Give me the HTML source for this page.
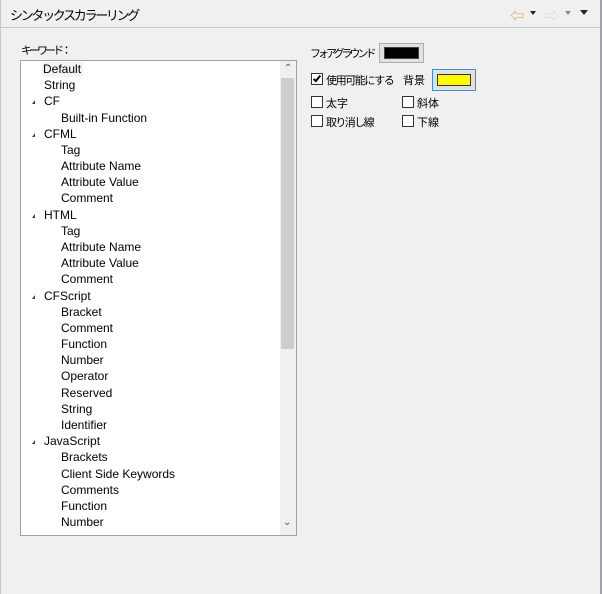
<!DOCTYPE html>
<html><head><meta charset="utf-8"><style>
*{margin:0;padding:0;box-sizing:border-box}
body{width:602px;height:594px;background:#f0f0f0;font-family:"Liberation Sans","Noto Sans CJK JP",sans-serif;font-size:12px;color:#000;position:relative;overflow:hidden}
.abs{position:absolute;white-space:nowrap}
.jp{font-size:11px}
#frame{position:absolute;left:0;top:0;width:602px;height:594px;border-left:1px solid #c8c8c8;border-right:2px solid #a0a0a8}
#hdrline{position:absolute;left:0;top:27px;width:600px;height:1px;background:#c8c8c8}
#list{position:absolute;left:20px;top:60px;width:277px;height:476px;background:#fff;border:1px solid #a0a0a8}
#sb{position:absolute;left:259px;top:0;width:16px;height:474px;background:#f0f0f0}
#thumb{position:absolute;left:1px;top:17px;width:13px;height:271px;background:#cdcdcd}
.row{position:absolute;white-space:nowrap;font-size:12px;line-height:14px}
.tri{position:absolute;width:0;height:0;border-left:3px solid transparent;border-bottom:4px solid #404040;border-right:0}
.cb{position:absolute;width:12px;height:12px;border:1px solid #333;background:#fff}
.btn{position:absolute;border:1px solid #adadad;background:#e1e1e1}
</style></head><body>
<div id="frame"></div>
<div class="abs" style="left:10px;top:5px;font-size:13px;letter-spacing:-2.3px">シンタックスカラーリング</div>
<div id="hdrline"></div>
<div class="abs" style="left:510px;top:6px;color:#e0a020;font-size:14px">⇦</div>
<div class="abs" style="left:530px;top:11px;width:0;height:0;border-left:3px solid transparent;border-right:3px solid transparent;border-top:4px solid #222"></div>
<div class="abs" style="left:545px;top:6px;color:#d0d0d0;font-size:14px">⇨</div>
<div class="abs" style="left:565px;top:11px;width:0;height:0;border-left:3px solid transparent;border-right:3px solid transparent;border-top:4px solid #888"></div>
<div class="abs" style="left:580px;top:10px;width:0;height:0;border-left:4px solid transparent;border-right:4px solid transparent;border-top:5px solid #223"></div>

<div class="abs jp" style="left:21px;top:42px;letter-spacing:-3px">キーワード：</div>
<div id="list">
<div class="row" style="left:21px;top:1px;background:#f3f3f3;padding:0 2px 1px 1px">Default</div>
<div id="sb"><div id="thumb"></div>
<div class="abs" style="left:4px;top:2px;font-size:10px;color:#555">⌃</div>
<div class="abs" style="left:3px;top:456px;font-size:10px;color:#555">⌄</div>
</div>
</div>
<div id="rows"></div>
<script>
var items=[[1,"Default"],[1,"String"],[0,"CF"],[2,"Built-in Function"],[0,"CFML"],[2,"Tag"],[2,"Attribute Name"],[2,"Attribute Value"],[2,"Comment"],[0,"HTML"],[2,"Tag"],[2,"Attribute Name"],[2,"Attribute Value"],[2,"Comment"],[0,"CFScript"],[2,"Bracket"],[2,"Comment"],[2,"Function"],[2,"Number"],[2,"Operator"],[2,"Reserved"],[2,"String"],[2,"Identifier"],[0,"JavaScript"],[2,"Brackets"],[2,"Client Side Keywords"],[2,"Comments"],[2,"Function"],[2,"Number"]];
var h="";
items.forEach(function(it,i){var y=62+i*16.18;
 if(i==0)return;
 var x=it[0]==2?61:44;
 h+='<div class="row" style="left:'+x+'px;top:'+y.toFixed(1)+'px">'+it[1]+'</div>';
 if(it[0]==0)h+='<div class="tri" style="left:32px;top:'+(y+6).toFixed(1)+'px"></div>';
});
document.getElementById("rows").innerHTML=h;
</script>

<div class="abs jp" style="left:310px;top:45px;letter-spacing:-3px">フォアグラウンド</div>
<div class="btn" style="left:379px;top:43px;width:45px;height:20px"><div style="margin:3px 4px;height:12px;background:#000;border:1px solid #444"></div></div>
<div class="cb" style="left:311px;top:73px"><div class="abs" style="left:3px;top:0px;width:4px;height:8px;border-right:2px solid #000;border-bottom:2px solid #000;transform:rotate(40deg)"></div></div>
<div class="abs jp" style="left:326px;top:72px;letter-spacing:-1.4px">使用可能にする</div>
<div class="abs jp" style="left:403px;top:72px">背景</div>
<div class="btn" style="left:432px;top:69px;width:44px;height:22px;border-color:#3c8ede"><div style="margin:4px 4px;height:12px;background:#ffff00;border:1px solid #333"></div></div>
<div class="cb" style="left:311px;top:96px"></div>
<div class="abs jp" style="left:326px;top:95px">太字</div>
<div class="cb" style="left:402px;top:96px"></div>
<div class="abs jp" style="left:417px;top:95px">斜体</div>
<div class="cb" style="left:311px;top:115px"></div>
<div class="abs jp" style="left:326px;top:114px;letter-spacing:-1.6px">取り消し線</div>
<div class="cb" style="left:402px;top:115px"></div>
<div class="abs jp" style="left:417px;top:114px">下線</div>
</body></html>
